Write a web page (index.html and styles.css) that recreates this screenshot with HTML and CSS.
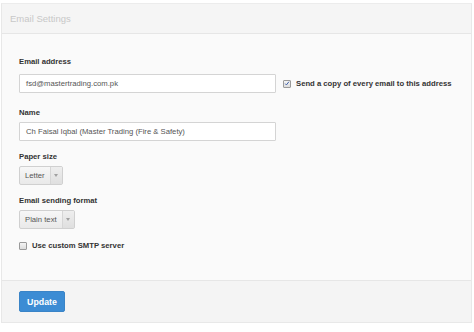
FILE: index.html
```html
<!DOCTYPE html>
<html>
<head>
<meta charset="utf-8">
<link rel="stylesheet" href="styles.css">
</head>
<body>
<div class="panel">
  <div class="panel-head">Email Settings</div>
  <div class="panel-body">
    <div class="group">
      <div class="label">Email address</div>
      <div class="email-row">
        <div class="input input-wide">fsd@mastertrading.com.pk</div>
        <span class="check">
          <svg viewBox="0 0 8 8" width="8" height="8"><path d="M1.6 4.2 L3.2 5.9 L6.6 1.6" fill="none" stroke="#3d5fa8" stroke-width="1.3"/></svg>
        </span>
        <span class="check-label">Send a copy of every email to this address</span>
      </div>
    </div>
    <div class="group">
      <div class="label">Name</div>
      <div class="input input-wide">Ch Faisal Iqbal (Master Trading (Fire &amp; Safety)</div>
    </div>
    <div class="group">
      <div class="label">Paper size</div>
      <div class="select"><span class="select-text">Letter</span><span class="select-arrow"><svg viewBox="0 0 4 3" width="4" height="3"><path d="M0 0 H4 L2 3 Z" fill="#a0a0a0"/></svg></span></div>
    </div>
    <div class="group">
      <div class="label">Email sending format</div>
      <div class="select"><span class="select-text">Plain text</span><span class="select-arrow"><svg viewBox="0 0 4 3" width="4" height="3"><path d="M0 0 H4 L2 3 Z" fill="#a0a0a0"/></svg></span></div>
    </div>
    <div class="group group-check">
      <span class="check"></span>
      <span class="check-label">Use custom SMTP server</span>
    </div>
  </div>
  <div class="panel-foot">
    <button class="btn">Update</button>
  </div>
</div>
</body>
</html>
```
FILE: styles.css
```css
html, body {
  margin: 0;
  padding: 0;
  background: #ffffff;
}
body {
  font-family: "Liberation Sans", Arial, sans-serif;
  font-size: 7.7px;
  color: #333333;
}
.panel {
  margin: 3px 2px 0 1px;
  border: 1px solid #e8e8e8;
  border-top-color: #ececec;
}
.panel-head {
  height: 29px;
  line-height: 29px;
  background: #f5f5f5;
  border-bottom: 1px solid #e6e6e6;
  padding-left: 8px;
  font-size: 9.5px;
  color: #c8c8c8;
}
.panel-body {
  background: #fafafa;
  padding: 22px 16px 0 17px;
  height: 224px;
  border-bottom: 1px solid #e6e6e6;
}
.group {
  margin-bottom: 10px;
}
.label {
  font-weight: bold;
  line-height: 11px;
  margin-bottom: 4px;
  color: #333333;
}
.email-row {
  display: flex;
  align-items: center;
  padding: 3px 0 4px 0;
}
.input {
  box-sizing: border-box;
  height: 19px;
  line-height: 17px;
  border: 1px solid #d4d4d4;
  background: #ffffff;
  padding-left: 6px;
  color: #555555;
  border-radius: 1px;
}
.input-wide {
  width: 257px;
}
.check {
  box-sizing: border-box;
  display: inline-flex;
  align-items: center;
  justify-content: center;
  width: 8px;
  height: 8px;
  border: 1px solid #9a9a9a;
  background: linear-gradient(#f4f4f4, #dcdcdc);
  border-radius: 1px;
  margin-left: 7px;
  margin-right: 5px;
  flex: none;
}
.check svg {
  display: block;
  width: 7px;
  height: 7px;
}
.check-label {
  font-weight: bold;
  line-height: 11px;
  color: #333333;
}
.select {
  display: inline-flex;
  box-sizing: border-box;
  height: 19px;
  border: 1px solid #d0d0d0;
  border-radius: 2px;
  background: linear-gradient(#f7f7f7, #e9e9e9);
  color: #555555;
  vertical-align: top;
}
.select-text {
  line-height: 17px;
  padding: 0 5px 0 5px;
}
.select-arrow {
  display: flex;
  align-items: center;
  justify-content: center;
  width: 11px;
  border-left: 1px solid #d6d6d6;
  background: linear-gradient(#eeeeee, #dfdfdf);
}
.group-check {
  display: flex;
  align-items: center;
  margin-top: 11px;
}
.group-check .check {
  margin-left: 0;
  margin-right: 5px;
}
.panel-foot {
  background: #f4f4f4;
  height: 41px;
  padding: 10px 0 0 17px;
  box-sizing: border-box;
}
.btn {
  font-family: "Liberation Sans", Arial, sans-serif;
  font-size: 8.8px;
  font-weight: bold;
  color: #ffffff;
  background: #3c8cd4;
  border: 1px solid #3a84c7;
  border-radius: 2px;
  height: 21px;
  width: 46px;
  padding: 0;
  margin: 0;
}
```
